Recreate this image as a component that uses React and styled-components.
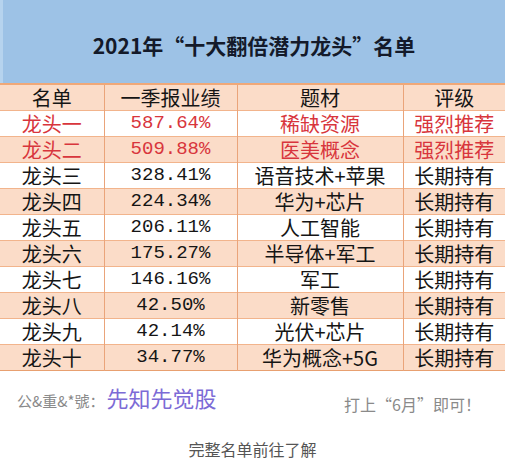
import styled, { createGlobalStyle } from "styled-components";

const GlobalStyle = createGlobalStyle`
  body {
    margin: 0;
    background: #ffffff;
    font-family: "Noto Sans CJK SC", "Noto Sans", sans-serif;
  }
`;

const rows = [
  { name: "龙头一", pct: "587.64%", topic: "稀缺资源", grade: "强烈推荐", hot: true },
  { name: "龙头二", pct: "509.88%", topic: "医美概念", grade: "强烈推荐", hot: true },
  { name: "龙头三", pct: "328.41%", topic: "语音技术+苹果", grade: "长期持有" },
  { name: "龙头四", pct: "224.34%", topic: "华为+芯片", grade: "长期持有" },
  { name: "龙头五", pct: "206.11%", topic: "人工智能", grade: "长期持有" },
  { name: "龙头六", pct: "175.27%", topic: "半导体+军工", grade: "长期持有" },
  { name: "龙头七", pct: "146.16%", topic: "军工", grade: "长期持有" },
  { name: "龙头八", pct: "42.50%", topic: "新零售", grade: "长期持有" },
  { name: "龙头九", pct: "42.14%", topic: "光伏+芯片", grade: "长期持有" },
  { name: "龙头十", pct: "34.77%", topic: "华为概念+5G", grade: "长期持有" },
];

export default function App() {
  return (
    <Page>
      <GlobalStyle />
      <Banner>2021年“十大翻倍潜力龙头”名单</Banner>
      <Table>
        <colgroup>
          <col style={{ width: 104 }} />
          <col style={{ width: 133 }} />
          <col style={{ width: 166 }} />
          <col />
        </colgroup>
        <thead>
          <Row $shade>
            <Cell as="th">名单</Cell>
            <Cell as="th">一季报业绩</Cell>
            <Cell as="th">题材</Cell>
            <Cell as="th">评级</Cell>
          </Row>
        </thead>
        <tbody>
          {rows.map((r, i) => (
            <Row key={r.name} $shade={i % 2 === 1} $hot={r.hot}>
              <Cell>{r.name}</Cell>
              <Cell $mono>{r.pct}</Cell>
              <Cell>{r.topic}</Cell>
              <Cell>{r.grade}</Cell>
            </Row>
          ))}
        </tbody>
      </Table>
      <Footer>
        <Account>
          公&amp;重&amp;*號：<Brand>先知先觉股</Brand>
        </Account>
        <Hint>打上“6月”即可！</Hint>
      </Footer>
      <More>完整名单前往了解</More>
    </Page>
  );
}

const Page = styled.div`
  width: 505px;
  height: 463px;
  overflow: hidden;
`;

const Banner = styled.div`
  height: 83px;
  background: #9dc2e6;
  border-left: 3px solid #b6d3ee;
  box-sizing: border-box;
  display: flex;
  align-items: center;
  justify-content: center;
  padding-top: 6px;
  font-size: 21px;
  font-weight: 700;
  color: #141a2a;
`;

const Table = styled.table`
  width: 505px;
  border-collapse: collapse;
  table-layout: fixed;
  border-top: 2px solid #f0a878;
  border-bottom: 1px solid #e8a070;
`;

const Row = styled.tr`
  background: ${(p) => (p.$shade ? "#fbdcc8" : "#ffffff")};
  color: ${(p) => (p.$hot ? "#d8353c" : "#151515")};
`;

const Cell = styled.td`
  padding: 0;
  height: 25px;
  line-height: 1.2;
  vertical-align: middle;
  text-align: center;
  font-weight: 400;
  white-space: nowrap;
  border-top: 1px solid #f2b48c;
  border-right: 1px solid #eaa47a;
  font-family: ${(p) =>
    p.$mono
      ? '"Liberation Mono", "DejaVu Sans Mono", monospace'
      : '"Noto Sans CJK SC", sans-serif'};
  font-size: ${(p) => (p.$mono ? "19px" : "20px")};
  &:last-child {
    border-right: none;
  }
`;

const Footer = styled.div`
  display: flex;
  justify-content: space-between;
  align-items: flex-start;
  padding: 10px 24px 0 17px;
  height: 66px;
  box-sizing: border-box;
`;

const Account = styled.div`
  font-size: 15px;
  color: #8a8a8a;
  display: flex;
  align-items: baseline;
`;

const Brand = styled.span`
  font-size: 22px;
  color: #7c6bd6;
  margin-left: 2px;
`;

const Hint = styled.div`
  font-size: 16px;
  color: #8a8a8a;
  margin-top: 11px;
`;

const More = styled.div`
  text-align: center;
  font-size: 16px;
  color: #555555;
`;
